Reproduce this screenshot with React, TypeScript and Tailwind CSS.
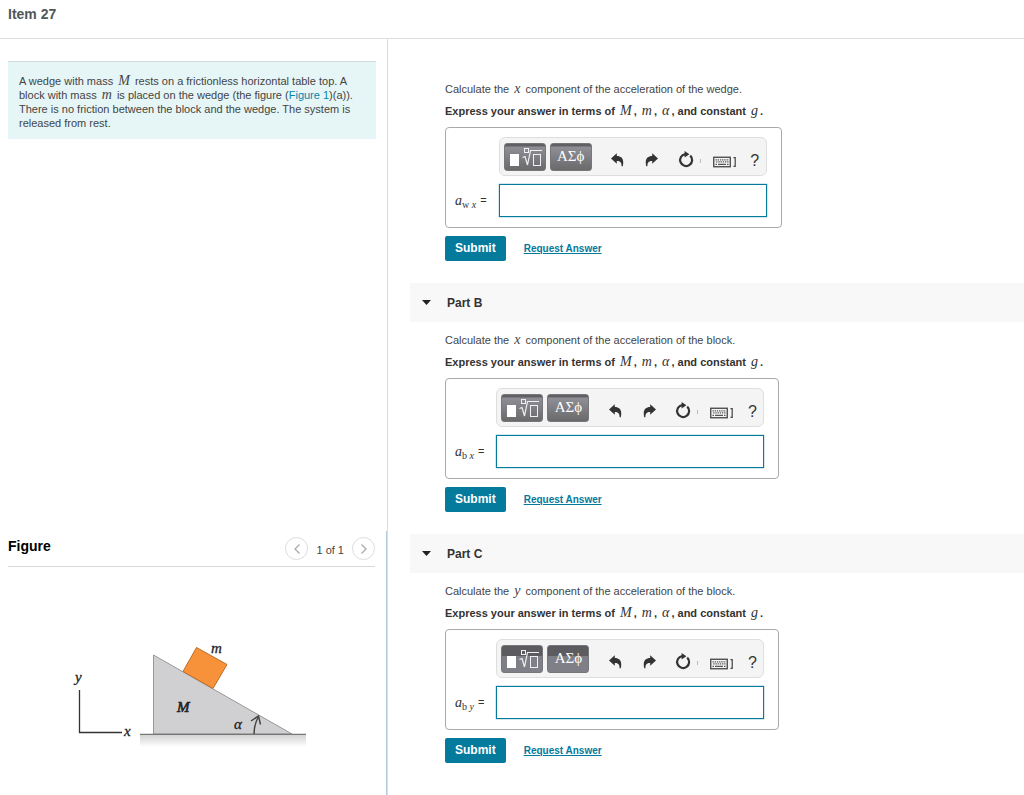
import type { ReactNode } from "react";
import clsx from "clsx";

const sans = "font-['Liberation_Sans',Arial,sans-serif]";
const serif = "font-['Liberation_Serif','Times_New_Roman',serif]";

type PartData = {
  id: string;
  title?: string;
  axis: string;
  subject: string;
  sub: string;
  darkTop?: boolean;
};

const parts: PartData[] = [
  { id: "a", axis: "x", subject: "wedge", sub: "w" },
  { id: "b", title: "Part B", axis: "x", subject: "block", sub: "b" },
  { id: "c", title: "Part C", axis: "y", subject: "block", sub: "b", darkTop: true },
];

function Var({ children }: { children: ReactNode }) {
  return (
    <i className={`${serif} px-0.5 text-[14px] leading-[0px] font-normal italic`}>{children}</i>
  );
}

function TemplatesIcon() {
  return (
    <svg width="34" height="20" viewBox="0 0 34 20" fill="none" stroke="#f0f0f2" aria-hidden="true">
      <rect x="2" y="7" width="9" height="12" fill="#fff" stroke="none" />
      <rect x="16.5" y="1.5" width="4" height="4" />
      <path d="M14.5 10.5L17 9.5L19.5 18L22.5 3.5H34" strokeWidth="1.2" />
      <rect x="25.5" y="7.5" width="7" height="11" />
    </svg>
  );
}

function ArrowIcon({ flip }: { flip?: boolean }) {
  return (
    <svg
      width="13"
      height="14"
      viewBox="0 0 13 14"
      fill="#333"
      className={clsx(flip && "-scale-x-100")}
      aria-hidden="true"
    >
      <path d="M0 5.4L5.8 0.2V3.1C10.6 3.2 13.4 6.2 11.8 13.2H10.6C10.6 9.4 9 8 5.8 8.1V10.8Z" />
    </svg>
  );
}

function ResetIcon() {
  return (
    <svg width="16" height="17" viewBox="0 0 16 17" fill="none" aria-hidden="true">
      <path d="M12.2 4.6A6 6 0 1 1 7.2 3.1" stroke="#333" strokeWidth="2.2" />
      <path d="M6.6 0L11.4 3.2L6.6 6.4Z" fill="#333" />
    </svg>
  );
}

function KeyboardIcon() {
  return (
    <svg width="24" height="12" viewBox="0 0 24 12" fill="none" aria-hidden="true">
      <rect x="0.75" y="1.25" width="16.5" height="9.5" stroke="#444" strokeWidth="1.3" />
      <path d="M2.5 3.8H16M3.2 5.9H16" stroke="#555" strokeWidth="1.2" strokeDasharray="1.3 0.9" />
      <path d="M2.5 8.3H4M5 8.3H13M14 8.3H15.5" stroke="#555" strokeWidth="1.2" />
      <path d="M20.5 1.7H22.2V10.3H20.5" stroke="#444" strokeWidth="1.2" />
    </svg>
  );
}

function Toolbar({ darkTop }: { darkTop?: boolean }) {
  const key = clsx(
    "flex h-7 w-[42px] shrink-0 justify-center rounded-[3px] border border-[#77777a] text-white",
    darkTop
      ? "bg-linear-to-b from-[#5c5c60] from-40% to-[#7f7f87] to-40%"
      : "bg-[linear-gradient(#606064_0px,#606064_2px,#8f8e96_3px,#6a6a6c_100%)]"
  );
  const tool = "flex h-7 shrink-0 items-center justify-center";

  return (
    <div
      role="toolbar"
      className="flex h-[39px] items-center rounded-md border border-[#dedede] bg-[#f4f4f4] px-1"
    >
      <button type="button" aria-label="Templates" className={`${key} items-center`}>
        <TemplatesIcon />
      </button>
      <button type="button" aria-label="Symbols" className={`${key} ${serif} ml-1 text-[15px] leading-6`}>
        ΑΣϕ
      </button>
      <button type="button" aria-label="Undo" className={`${tool} ml-3 w-7 pt-1.5`}>
        <ArrowIcon />
      </button>
      <button type="button" aria-label="Redo" className={`${tool} ml-1.5 w-7 pt-1.5`}>
        <ArrowIcon flip />
      </button>
      <button type="button" aria-label="Reset" className={`${tool} ml-1.5 w-7 pt-1.5`}>
        <ResetIcon />
      </button>
      <span className="mt-2 h-1 w-px shrink-0 bg-[#bbb]" />
      <button type="button" aria-label="Keyboard shortcuts" className={`${tool} ml-3 w-6 pt-2.5`}>
        <KeyboardIcon />
      </button>
      <button type="button" aria-label="Help" className={`${tool} ml-2 w-5 pt-2 text-[16px] text-[#333]`}>
        ?
      </button>
    </div>
  );
}

function Part({ part }: { part: PartData }) {
  const inputId = `answer-${part.id}`;

  return (
    <section>
      {part.title && (
        <h2 className="mb-[11px] flex h-[39px] items-center bg-[#f8f8f8] pl-3">
          <button type="button" className="flex items-center gap-4 text-[12px] font-bold text-[#333]">
            <svg width="9" height="5" viewBox="0 0 9 5" fill="#222" aria-hidden="true">
              <path d="M0 0H9L4.5 5Z" />
            </svg>
            {part.title}
          </button>
        </h2>
      )}
      <div className="pb-[22px] pl-[35px]">
        <p className="leading-[14px]">
          Calculate the <Var>{part.axis}</Var> component of the acceleration of the {part.subject}.
        </p>
        <p className="mt-2 leading-[14px] font-bold text-[#333]">
          Express your answer in terms of <Var>M</Var>, <Var>m</Var>, <Var>α</Var>, and constant{" "}
          <Var>g</Var>.
        </p>
        <form>
          <div className="mt-[9px] flex w-fit items-end gap-3 rounded border border-[#aaa] pt-[9px] pr-3.5 pb-2.5 pl-[9px]">
            <label htmlFor={inputId} className="flex h-[33px] items-center leading-none text-[#333]">
              <i className={`${serif} text-[14px]`}>a</i>
              <span className={`${serif} pt-2 text-[10px]`}>
                {part.sub} <i>{part.axis}</i>
              </span>
              <span className="pl-1">=</span>
            </label>
            <div className="flex w-[268px] flex-col gap-2">
              <Toolbar darkTop={part.darkTop} />
              <input
                id={inputId}
                type="text"
                className="h-[33px] w-full border border-[#047a9c] bg-white px-2 text-sm shadow-[0_0_1px_#047a9c] outline-none"
              />
            </div>
          </div>
          <div className="mt-2 flex h-[25px] items-center gap-[18px]">
            <button
              type="submit"
              className="h-full rounded-xs bg-[#047a9c] px-2.5 pb-px text-[12px] font-bold text-white"
            >
              Submit
            </button>
            <a href="#request" className="text-[10px] font-bold text-[#047a9c] underline">
              Request Answer
            </a>
          </div>
        </form>
      </div>
    </section>
  );
}

function WedgeFigure() {
  return (
    <svg
      width="240"
      height="112"
      viewBox="70 640 240 112"
      role="img"
      aria-label="Block on a wedge"
      className="font-['Liberation_Serif','Times_New_Roman',serif] italic"
    >
      <defs>
        <linearGradient id="ground" x1="0" y1="0" x2="0" y2="1">
          <stop offset="0" stopColor="#cfcfd1" />
          <stop offset="1" stopColor="#fff" />
        </linearGradient>
      </defs>
      <rect x="140" y="734" width="166" height="13" fill="url(#ground)" />
      <path d="M153.5 655L292 734H153.5Z" fill="#d0d0d2" stroke="#98989a" />
      <path d="M140 734.3H306" stroke="#777" strokeWidth="1.3" />
      <path d="M196.5 647.5L227 664.5L213 688.5L183 671.5Z" fill="#f7923a" stroke="#bd6c24" />
      <path d="M79.5 690V732.5H122" fill="none" stroke="#333" strokeWidth="1.3" />
      <path d="M254 734C254 728 255.5 722 258.5 716.5" fill="none" stroke="#444" strokeWidth="1.5" />
      <path d="M251 721L258.5 716L260.5 724.5" fill="none" stroke="#444" strokeWidth="1.5" />
      <g fill="#222" fontSize="15" stroke="#222" strokeWidth="0.3">
        <text x="75" y="682">y</text>
        <text x="124" y="736">x</text>
        <text x="211" y="653">m</text>
        <text x="177" y="712" strokeWidth="0.6">M</text>
        <text x="234" y="729">α</text>
      </g>
    </svg>
  );
}

function PagerButton({ label, d }: { label: string; d: string }) {
  return (
    <button
      type="button"
      aria-label={label}
      className="flex size-[23px] items-center justify-center rounded-full border border-[#ddd]"
    >
      <svg width="6" height="10" viewBox="0 0 6 10" fill="none" stroke="#aaa" strokeWidth="1.3">
        <path d={d} />
      </svg>
    </button>
  );
}

export default function App() {
  return (
    <div className={`${sans} flex min-h-screen flex-col bg-white text-[11px] text-[#444]`}>
      <header className="h-[39px] border-b border-[#dcdfe0] px-2 pt-1">
        <h1 className="text-[14px] leading-5 font-bold text-[#505759]">Item 27</h1>
      </header>
      <div className="flex flex-1">
        <aside className="flex w-[388px] shrink-0 flex-col justify-between border-r border-[#d5dce3] pl-2">
          <p className="mt-[22px] mr-[11px] border-t border-[#cfdcdc] bg-[#e6f6f6] pt-3 pr-2 pb-[9px] pl-[11px] leading-[14px]">
            A wedge with mass <Var>M</Var> rests on a frictionless horizontal table top. A block with
            mass <Var>m</Var> is placed on the wedge (the figure (
            <a href="#figure" className="text-[#0585a8]">
              Figure 1
            </a>
            )(a)). There is no friction between the block and the wedge. The system is released from
            rest.
          </p>
          <section id="figure" className="border-r border-[#b9cbe0] pr-[11px] pb-[43px]">
            <div className="flex h-9 items-center justify-between border-b border-[#d8d8d8]">
              <h2 className="pb-1 text-[14px] font-bold text-black">Figure</h2>
              <div className="flex items-center gap-2">
                <PagerButton label="Previous figure" d="M5.5 0.5L1 5L5.5 9.5" />
                <span className="pt-1">1 of 1</span>
                <PagerButton label="Next figure" d="M0.5 0.5L5 5L0.5 9.5" />
              </div>
            </div>
            <div className="mt-[73px] pl-[62px]">
              <WedgeFigure />
            </div>
          </section>
        </aside>
        <main className="min-w-0 flex-1 pt-[43px] pl-[22px]">
          {parts.map((part) => (
            <Part key={part.id} part={part} />
          ))}
        </main>
      </div>
    </div>
  );
}
